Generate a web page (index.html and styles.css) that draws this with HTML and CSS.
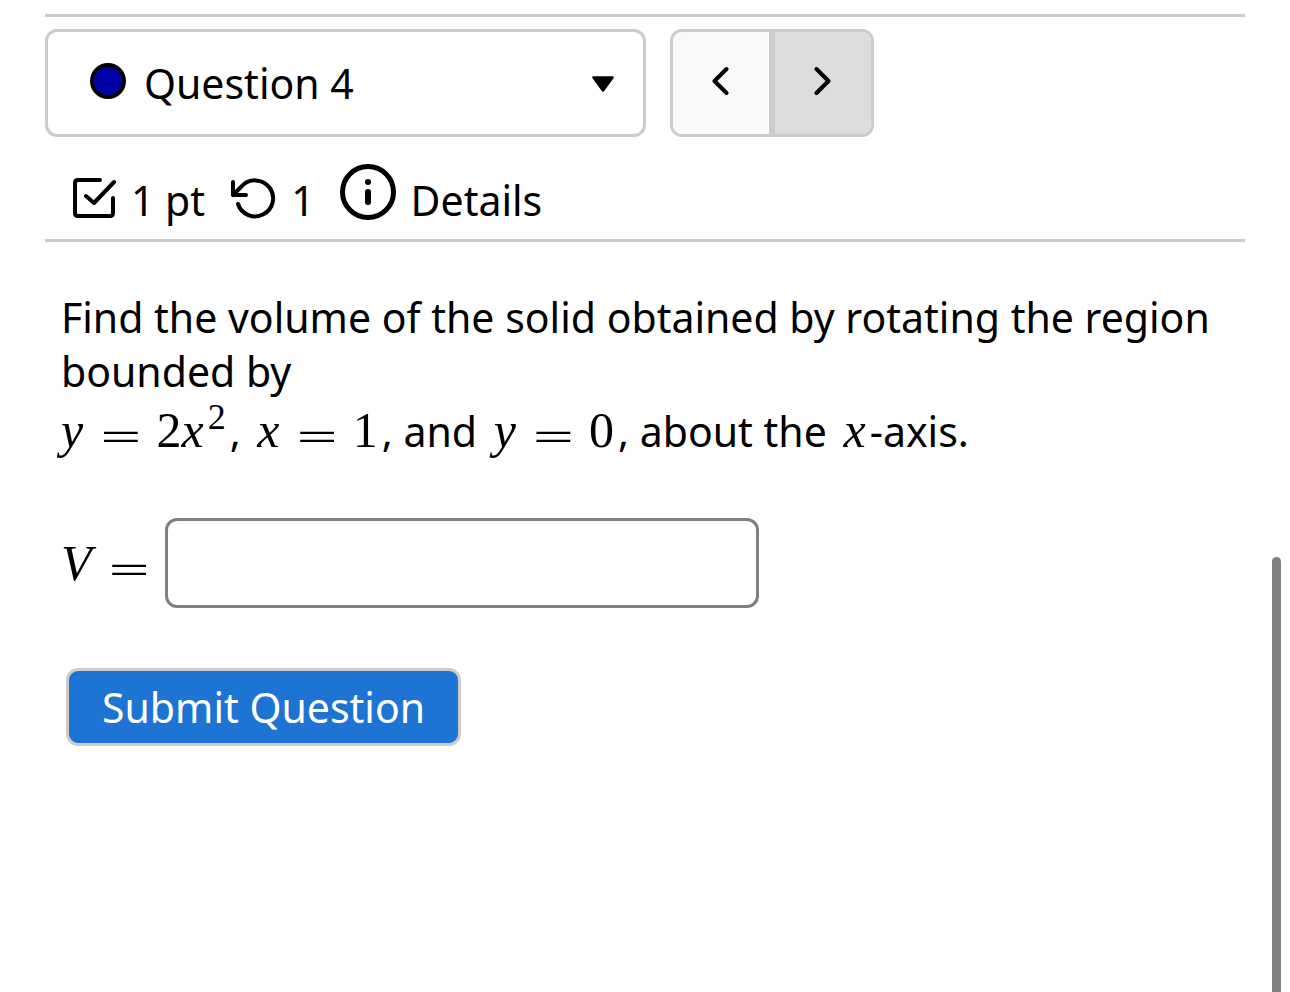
FILE: index.html
```html
<!DOCTYPE html>
<html lang="en">
<head>
<meta charset="utf-8">
<meta name="viewport" content="width=device-width, initial-scale=1">
<title>Question 4</title>
<link rel="stylesheet" href="styles.css">
</head>
<body>
<main class="page">
  <header class="question-header">
    <div class="nav-row">
      <div class="picker">
        <svg class="status-dot" viewBox="0 0 36 36" aria-hidden="true"><circle cx="18" cy="18" r="16" fill="#0000a8" stroke="#000" stroke-width="4"/></svg>
        <select class="picker-select" aria-label="Question">
          <option>Question 4</option>
        </select>
        <svg class="caret" viewBox="0 0 22 16" aria-hidden="true"><path d="M1.500 1.500h19L11 14.500z" fill="#000" stroke="#000" stroke-width="2.500" stroke-linejoin="round"/></svg>
      </div>
      <nav class="pager" aria-label="Question navigation">
        <button class="pager-button" type="button" aria-label="Previous question">
          <svg class="chevron" viewBox="0 0 18 30" aria-hidden="true"><path d="M14.500 3 2.500 15l12 12"/></svg>
        </button>
        <button class="pager-button pager-next" type="button" aria-label="Next question">
          <svg class="chevron" viewBox="0 0 18 30" aria-hidden="true"><path d="M2.500 3 14.500 15l-12 12"/></svg>
        </button>
      </nav>
    </div>
    <div class="meta">
      <span class="meta-item">
        <svg class="icon-check" viewBox="0 0 44 42" aria-hidden="true"><path d="M28 3H6Q3 3 3 6v30q0 3 3 3h32q3 0 3-3V21M14 19l8 7L42 5"/></svg>
        <span>1 pt</span>
      </span>
      <span class="meta-item">
        <svg class="icon-retry" viewBox="0 0 46 42" aria-hidden="true"><path d="M3 5v13h13M3 18l9-9a18 18 0 1 1-4 18"/></svg>
        <span>1</span>
      </span>
      <button class="meta-item details" type="button">
        <svg class="icon-info" viewBox="0 0 56 56" aria-hidden="true"><circle cx="28" cy="28" r="25.500"/><path d="M28 28v10" stroke-width="6"/><circle class="info-dot" cx="28" cy="18" r="3"/></svg>
        <span>Details</span>
      </button>
    </div>
  </header>
  <form class="question">
    <p class="prompt">Find the volume of the solid obtained by rotating the region bounded by</p>
    <p class="conditions"><span class="math"><var>y</var><span class="eq">=</span>2<var>x</var><sup>2</sup></span>, <span class="math"><var>x</var><span class="eq">=</span>1</span>, and <span class="math"><var>y</var><span class="eq">=</span>0</span>, about the <span class="math"><var>x</var></span>-axis.</p>
    <div class="answer">
      <label class="math" for="volume"><var>V</var><span class="eq">=</span></label>
      <input class="answer-input" id="volume" type="text" autocomplete="off">
    </div>
    <button class="submit" type="button">Submit Question</button>
  </form>
</main>
<div class="scroll-thumb" aria-hidden="true"></div>
</body>
</html>
```
FILE: styles.css
```css
* { box-sizing: border-box; }
body {
  margin: 0;
  background: #fff;
  color: #000;
  font-family: "Trebuchet MS", "Noto Sans", sans-serif;
  font-size: 41px;
  line-height: 54px;
}
button, select, input { font: inherit; color: inherit; }
button { cursor: pointer; }
p { margin: 0; }
svg { display: block; flex: none; }
.page { padding: 14px 45px; }
.question-header {
  border-top: 3px solid #ccc;
  border-bottom: 3px solid #ccc;
  padding-top: 12px;
}
.nav-row { display: flex; gap: 24px; }
.picker {
  display: flex;
  align-items: center;
  flex: 0 1 601px;
  min-width: 0;
  height: 108px;
  padding: 0 29px 0 42px;
  border: 3px solid #ccc;
  border-radius: 12px;
}
.status-dot { width: 36px; height: 36px; margin-bottom: 4px; }
.picker-select {
  flex: 1;
  min-width: 0;
  height: 100%;
  padding: 0 0 0 18px;
  border: 0;
  background: transparent;
  appearance: none;
}
.caret { width: 22px; height: 16px; margin-top: 2px; }
.pager {
  display: flex;
  border: 3px solid #ccc;
  border-radius: 12px;
  overflow: hidden;
}
.pager-button {
  display: grid;
  place-items: center;
  width: 99px;
  padding: 0 0 4px;
  border: 0;
  border-right: 3px solid #ccc;
  background: #f9f9f9;
}
.pager-next {
  border-right: 0;
  border-left: 3px solid #ccc;
  background: #ddd;
}
.chevron { width: 18px; height: 30px; fill: none; stroke: #000; stroke-width: 4; stroke-linecap: round; stroke-linejoin: round; }
.meta {
  display: flex;
  align-items: flex-end;
  gap: 25px;
  height: 102px;
  padding: 0 27px 12px;
}
.meta-item { display: flex; align-items: center; gap: 15px; height: 54px; }
.meta-item svg { fill: none; stroke: #000; stroke-width: 4; stroke-linecap: round; stroke-linejoin: round; }
.icon-check { width: 44px; height: 42px; margin-bottom: 4px; }
.icon-retry { width: 46px; height: 42px; margin-bottom: 4px; }
.details { padding: 0; border: 0; background: none; }
.meta-item .icon-info { width: 56px; height: 56px; margin-bottom: 16px; stroke-width: 5; }
.icon-info .info-dot { fill: #000; stroke: none; }
.question { padding: 48px 16px; }
.conditions { line-height: 66px; }
.math { margin-right: 4px; font-family: "Liberation Serif", serif; font-size: 50px; line-height: 48px; white-space: nowrap; }
.math + .math { margin-left: 6px; }
.math:last-child { margin-right: 0; }
.math var { padding-right: 4px; font-style: italic; }
.eq { margin: 0 13px 0 11px; font-family: "DejaVu Sans Light", "DejaVu Sans", sans-serif; font-size: 54px; font-weight: 200; line-height: 0; vertical-align: -7px; }
.math sup { font-size: 36px; line-height: 0; }
.answer { display: flex; align-items: center; margin-top: 54px; }
.answer .math { margin: 0; }
.answer-input {
  flex: 0 1 594px;
  min-width: 0;
  height: 90px;
  padding: 0 16px;
  border: 3px solid #808080;
  border-radius: 12px;
  background: #fff;
}
.submit {
  margin: 60px 0 0 5px;
  height: 78px;
  padding: 0 33px;
  border: 3px solid #ccc;
  border-radius: 12px;
  background: #1e74d2;
  color: #fff;
}
.scroll-thumb {
  position: fixed;
  top: 557px;
  right: 9px;
  bottom: 0;
  width: 9px;
  border-radius: 5px 5px 0 0;
  background: #808080;
}
```
